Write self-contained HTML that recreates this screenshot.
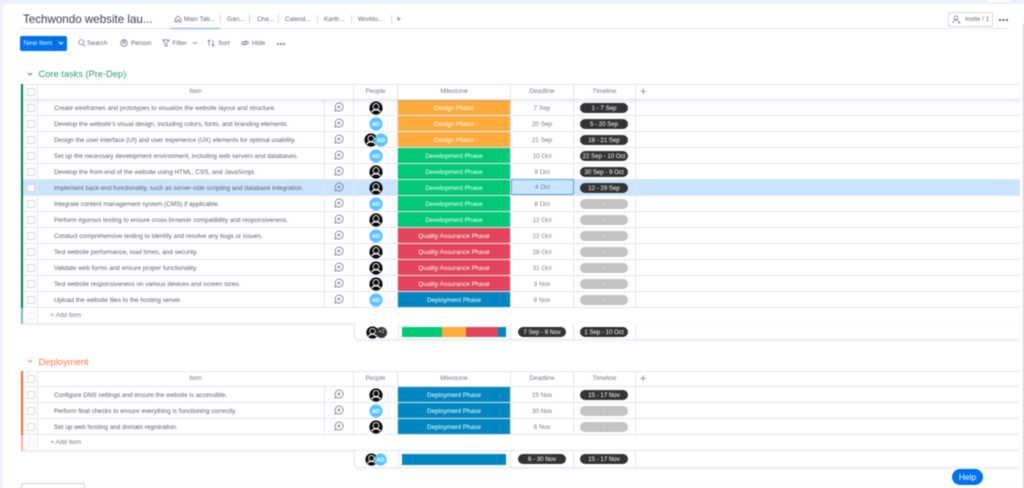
<!DOCTYPE html>
<html><head><meta charset="utf-8"><style>
html,body{margin:0;padding:0;width:1024px;height:488px;overflow:hidden;background:#ecf0fa}
*{box-sizing:border-box}
#p{position:absolute;left:0;top:0;width:1024px;height:488px;overflow:hidden;filter:blur(.4px);font-family:"Liberation Sans",sans-serif;color:#676879}
#w{position:absolute;left:3px;top:4px;width:1021px;height:490px;background:#fff;border-radius:4px 0 0 0}
.a{position:absolute;white-space:nowrap}
.ln{position:absolute;background:#e3e6f3}
.r{position:absolute;left:21px;width:999px;height:16px;border-bottom:1px solid #e3e6f3;font-size:6.35px;line-height:17px}
.r>*{position:absolute;top:0}
.bar{left:0;width:2px;height:16px;top:0}
.cb{left:6px;top:4px!important;width:7.5px;height:7.5px;border:1px solid #d5d8e3;border-radius:1px;background:#fff}
.v1,.v2,.v3,.v4,.v5,.v6{top:0;height:15px;width:1px;background:#e3e6f3}
.v1{left:16px}.v2{left:303px}.v3{left:332px}.v4{left:376px}.v5{left:489px}.v6{left:552px}.v7{left:614px;top:0;height:15px;width:1px;background:#e3e6f3}
.t{left:33px;white-space:nowrap;color:#5f6072}
.ch{left:313px;top:1.5px!important;width:10px;height:10px}
.av{left:348px;top:.5px!important;width:14px;height:14px}
.m{left:377px;width:112px;height:15px;text-align:center;color:#fff;font-size:6.4px}
.d{left:490px;width:62px;text-align:center;color:#7b7c8b;font-size:6.4px}
.pl{left:559px;width:48px;top:2.5px!important;height:10px;border-radius:5px;background:#333;color:#fff;text-align:center;font-size:6.1px;line-height:11px}
.g{background:#c4c4c4}
.or{background:#fdab3d}.gr{background:#00c875}.re{background:#e2445c}.bl{background:#0086c0}
.h{height:16px;color:#7b7c8b;font-size:6.4px;border-top:1px solid #e3e6f3}
.h>div{line-height:14.5px}
.c{text-align:center}
.add{left:29.5px;color:#7b7c8b;line-height:16px}
.sum{position:absolute;left:354px;width:666px;height:17px;background:#fff;border-bottom:1px solid #e6e9f4;border-left:1px solid #e6e9f4;border-radius:0 0 0 4px;box-shadow:0 1px 2px rgba(120,130,170,.12)}
.sum>*{position:absolute}
.sum .pl{left:225px;top:3.5px!important}
.vv{top:0;height:16px;width:1px;background:#e3e6f3}
.tb{font-size:6.4px;line-height:10px;top:14.5px}
.sep{top:15px;width:1px;height:8px;background:#d5d8e3}
.tl{font-size:6.4px;line-height:10px;top:38.5px}
</style></head><body><div id="p"><div id="w"></div>
<div class="a" style="left:987px;top:0;width:23px;height:2px;background:#fff"></div>
<svg width="0" height="0" style="position:absolute"><defs>
<symbol id="u" viewBox="0 0 14 14"><circle cx="7" cy="7" r="6.6" fill="#0b0b0e"/><circle cx="7" cy="5.6" r="3" fill="#0b0b0e" stroke="#fff" stroke-width=".9"/><path d="M2.6 11.2C3.5 9.3 5 8.9 7 8.9s3.5.4 4.4 2.3" fill="none" stroke="#fff" stroke-width="1.2"/></symbol>
<symbol id="ad" viewBox="0 0 14 14"><circle cx="7" cy="7" r="6.6" fill="#5ac5fd"/><text x="7" y="9" text-anchor="middle" font-family="Liberation Sans" font-size="5.8" font-weight="bold" fill="#fff">AD</text></symbol>
<symbol id="c" viewBox="0 0 10 10"><path d="M5 1a4 4 0 1 1-2 7.4L1 9l.7-2A4 4 0 0 1 5 1z" fill="none" stroke="#75768a" stroke-width=".8"/><path d="M3.2 5h3.6M5 3.2v3.6" stroke="#75768a" stroke-width=".8"/></symbol>
</defs></svg>

<!-- top bar -->
<div class="a" style="left:23px;top:11px;font-size:11.6px;line-height:18px;color:#3f404c">Techwondo website lau...</div>
<svg class="a" style="left:174px;top:15px" width="8" height="8" viewBox="0 0 8 8"><path d="M1 4l3-3 3 3v3H5V5H3v2H1z" fill="none" stroke="#6f7081" stroke-width=".7"/></svg>
<div class="a tb" style="left:184px">Main Tab...</div>
<div class="a tb" style="left:227px">Gan...</div>
<div class="a tb" style="left:257px">Cha...</div>
<div class="a tb" style="left:285px">Calend...</div>
<div class="a tb" style="left:324px">Kanb...</div>
<div class="a tb" style="left:358px">Worklo...</div>
<div class="a" style="left:396px;top:13.5px;font-size:9px;line-height:11px">+</div>
<div class="ln sep" style="left:220px"></div>
<div class="ln sep" style="left:249px"></div>
<div class="ln sep" style="left:278px"></div>
<div class="ln sep" style="left:317px"></div>
<div class="ln sep" style="left:351px"></div>
<div class="ln sep" style="left:391px"></div>
<div class="ln" style="left:20px;top:28px;width:989px;height:1px"></div>
<div class="ln" style="left:170px;top:28px;width:50px;height:1px;background:#6aa9ee"></div>
<div class="a" style="left:948px;top:12px;width:45px;height:15px;border:1px solid #d5d8e3;border-radius:2px"></div>
<svg class="a" style="left:952px;top:15px" width="9" height="9" viewBox="0 0 9 9"><circle cx="4" cy="2.6" r="1.8" fill="none" stroke="#6f7081" stroke-width=".7"/><path d="M1 8c0-2 1.2-3 3-3s2 .5 2.3 1M6 7.4h2.4M7.2 6.2v2.4" fill="none" stroke="#6f7081" stroke-width=".7"/></svg>
<div class="a" style="left:965px;top:14.5px;font-size:6.4px;line-height:10px">Invite / 1</div>
<div class="a" style="left:999px;top:19px;width:9px;height:2px;background:radial-gradient(circle at 1px 1px,#50515f 1px,transparent 1.1px) 0 0/3.4px 2px repeat-x"></div>

<!-- toolbar -->
<div class="a" style="left:20px;top:36px;width:47px;height:15px;background:#0073ea;border-radius:2px"></div>
<div class="a" style="left:54px;top:36px;width:1px;height:15px;background:#0060c4"></div>
<div class="a" style="left:23.5px;top:38.5px;font-size:6.8px;line-height:10px;color:#e4f0ff">New Item</div>
<svg class="a" style="left:58px;top:41px" width="6" height="5" viewBox="0 0 6 5"><path d="M1 1l2 2 2-2" fill="none" stroke="#fff" stroke-width="1"/></svg>
<svg class="a" style="left:78px;top:39px" width="8" height="8" viewBox="0 0 8 8"><circle cx="3.2" cy="3.2" r="2.5" fill="none" stroke="#6f7081" stroke-width=".7"/><path d="M5 5l2.4 2.4" stroke="#6f7081" stroke-width=".7"/></svg>
<div class="a tl" style="left:87px">Search</div>
<svg class="a" style="left:120px;top:39px" width="8" height="8" viewBox="0 0 8 8"><circle cx="4" cy="4" r="3.4" fill="none" stroke="#6f7081" stroke-width=".7"/><circle cx="4" cy="3.2" r="1.3" fill="none" stroke="#6f7081" stroke-width=".7"/></svg>
<div class="a tl" style="left:131px">Person</div>
<svg class="a" style="left:162px;top:39px" width="8" height="8" viewBox="0 0 8 8"><path d="M.6 1h6.8L5 4v3.4L3 6.6V4z" fill="none" stroke="#6f7081" stroke-width=".7"/></svg>
<div class="a tl" style="left:172.5px">Filter</div>
<svg class="a" style="left:192px;top:41px" width="6" height="5" viewBox="0 0 6 5"><path d="M1 1l2 2 2-2" fill="none" stroke="#6f7081" stroke-width=".7"/></svg>
<svg class="a" style="left:207px;top:39px" width="8" height="8" viewBox="0 0 8 8"><path d="M2 1v6M.6 2.3L2 1l1.4 1.3M6 7V1M4.6 5.7L6 7l1.4-1.3" fill="none" stroke="#6f7081" stroke-width=".7"/></svg>
<div class="a tl" style="left:218px">Sort</div>
<svg class="a" style="left:241px;top:40px" width="8" height="6" viewBox="0 0 8 6"><path d="M.5 3C2 1 6 1 7.5 3 6 5 2 5 .5 3z" fill="none" stroke="#6f7081" stroke-width=".7"/><path d="M2 5.5L6 .5" stroke="#6f7081" stroke-width=".7"/></svg>
<div class="a tl" style="left:252px">Hide</div>
<div class="a" style="left:277px;top:43px;width:8px;height:2px;background:radial-gradient(circle at 1px 1px,#6f7081 .8px,transparent .9px) 0 0/3px 2px repeat-x"></div>

<!-- group 1 -->
<svg class="a" style="left:27px;top:72px" width="6" height="5" viewBox="0 0 6 5"><path d="M1 1l2 2 2-2" fill="none" stroke="#037f4c" stroke-width=".8"/></svg>
<div class="a" style="left:38.5px;top:68px;font-size:9.3px;line-height:13px;color:#2f9f6e">Core tasks (Pre-Dep)</div>

<div class="r h" style="top:84px;box-shadow:0 2px 3px rgba(120,130,170,.14);z-index:2;background:#fff"><div class="bar" style="background:#037f4c;top:-1px"></div><div class="cb" style="top:3px!important"></div><div class="v1"></div><div class="v3"></div><div class="v4"></div><div class="v5"></div><div class="v6"></div><div class="v7"></div><div class="c" style="left:17px;width:315px">Item</div><div class="c" style="left:333px;width:43px">People</div><div class="c" style="left:377px;width:112px">Milestone</div><div class="c" style="left:490px;width:62px">Deadline</div><div class="c" style="left:553px;width:61px">Timeline</div><div style="left:619px;font-size:11px;color:#80818f;line-height:14px">+</div></div>

<div class="r" style="top:100px"><div class="bar" style="background:#037f4c"></div><div class="cb"></div><div class="v1"></div><div class="v2"></div><div class="v3"></div><div class="v4"></div><div class="v5"></div><div class="v6"></div><div class="v7"></div><div class="t">Create wireframes and prototypes to visualize the website layout and structure.</div><svg class="ch"><use href="#c"/></svg><svg class="av"><use href="#u"/></svg><div class="m or">Design Phase</div><div class="d">7 Sep</div><div class="pl">1 - 7 Sep</div></div>
<div class="r" style="top:116px"><div class="bar" style="background:#037f4c"></div><div class="cb"></div><div class="v1"></div><div class="v2"></div><div class="v3"></div><div class="v4"></div><div class="v5"></div><div class="v6"></div><div class="v7"></div><div class="t">Develop the website's visual design, including colors, fonts, and branding elements.</div><svg class="ch"><use href="#c"/></svg><svg class="av"><use href="#ad"/></svg><div class="m or">Design Phase</div><div class="d">20 Sep</div><div class="pl">5 - 20 Sep</div></div>
<div class="r" style="top:132px"><div class="bar" style="background:#037f4c"></div><div class="cb"></div><div class="v1"></div><div class="v2"></div><div class="v3"></div><div class="v4"></div><div class="v5"></div><div class="v6"></div><div class="v7"></div><div class="t">Design the user interface (UI) and user experience (UX) elements for optimal usability.</div><svg class="ch"><use href="#c"/></svg><svg class="av" style="left:343px"><use href="#u"/></svg><svg class="av" style="left:353px"><use href="#ad"/></svg><div class="m or">Design Phase</div><div class="d">21 Sep</div><div class="pl">18 - 21 Sep</div></div>
<div class="r" style="top:148px"><div class="bar" style="background:#037f4c"></div><div class="cb"></div><div class="v1"></div><div class="v2"></div><div class="v3"></div><div class="v4"></div><div class="v5"></div><div class="v6"></div><div class="v7"></div><div class="t">Set up the necessary development environment, including web servers and databases.</div><svg class="ch"><use href="#c"/></svg><svg class="av"><use href="#ad"/></svg><div class="m gr">Development Phase</div><div class="d">10 Oct</div><div class="pl">22 Sep - 10 Oct</div></div>
<div class="r" style="top:164px"><div class="bar" style="background:#037f4c"></div><div class="cb"></div><div class="v1"></div><div class="v2"></div><div class="v3"></div><div class="v4"></div><div class="v5"></div><div class="v6"></div><div class="v7"></div><div class="t">Develop the front-end of the website using HTML, CSS, and JavaScript.</div><svg class="ch"><use href="#c"/></svg><svg class="av"><use href="#u"/></svg><div class="m gr">Development Phase</div><div class="d">9 Oct</div><div class="pl">30 Sep - 9 Oct</div></div>
<div class="r" style="top:180px;background:#cce5ff"><div class="bar" style="background:#037f4c"></div><div class="cb"></div><div class="v1"></div><div class="v2"></div><div class="v3"></div><div class="v4"></div><div class="v5"></div><div class="v6"></div><div class="v7"></div><div class="t">Implement back-end functionality, such as server-side scripting and database integration.</div><svg class="ch"><use href="#c"/></svg><svg class="av"><use href="#u"/></svg><div class="m gr">Development Phase</div><div class="d" style="left:490px;width:63px;height:16px;border:1px solid #5b9fe8;top:-1px;line-height:16px">4 Oct</div><div class="pl">12 - 29 Sep</div></div>
<div class="r" style="top:196px"><div class="bar" style="background:#037f4c"></div><div class="cb"></div><div class="v1"></div><div class="v2"></div><div class="v3"></div><div class="v4"></div><div class="v5"></div><div class="v6"></div><div class="v7"></div><div class="t">Integrate content management system (CMS) if applicable.</div><svg class="ch"><use href="#c"/></svg><svg class="av"><use href="#ad"/></svg><div class="m gr">Development Phase</div><div class="d">8 Oct</div><div class="pl g">-</div></div>
<div class="r" style="top:212px"><div class="bar" style="background:#037f4c"></div><div class="cb"></div><div class="v1"></div><div class="v2"></div><div class="v3"></div><div class="v4"></div><div class="v5"></div><div class="v6"></div><div class="v7"></div><div class="t">Perform rigorous testing to ensure cross-browser compatibility and responsiveness.</div><svg class="ch"><use href="#c"/></svg><svg class="av"><use href="#u"/></svg><div class="m gr">Development Phase</div><div class="d">12 Oct</div><div class="pl g">-</div></div>
<div class="r" style="top:228px"><div class="bar" style="background:#037f4c"></div><div class="cb"></div><div class="v1"></div><div class="v2"></div><div class="v3"></div><div class="v4"></div><div class="v5"></div><div class="v6"></div><div class="v7"></div><div class="t">Conduct comprehensive testing to identify and resolve any bugs or issues.</div><svg class="ch"><use href="#c"/></svg><svg class="av"><use href="#ad"/></svg><div class="m re">Quality Assurance Phase</div><div class="d">22 Oct</div><div class="pl g">-</div></div>
<div class="r" style="top:244px"><div class="bar" style="background:#037f4c"></div><div class="cb"></div><div class="v1"></div><div class="v2"></div><div class="v3"></div><div class="v4"></div><div class="v5"></div><div class="v6"></div><div class="v7"></div><div class="t">Test website performance, load times, and security.</div><svg class="ch"><use href="#c"/></svg><svg class="av"><use href="#u"/></svg><div class="m re">Quality Assurance Phase</div><div class="d">28 Oct</div><div class="pl g">-</div></div>
<div class="r" style="top:260px"><div class="bar" style="background:#037f4c"></div><div class="cb"></div><div class="v1"></div><div class="v2"></div><div class="v3"></div><div class="v4"></div><div class="v5"></div><div class="v6"></div><div class="v7"></div><div class="t">Validate web forms and ensure proper functionality.</div><svg class="ch"><use href="#c"/></svg><svg class="av"><use href="#u"/></svg><div class="m re">Quality Assurance Phase</div><div class="d">31 Oct</div><div class="pl g">-</div></div>
<div class="r" style="top:276px"><div class="bar" style="background:#037f4c"></div><div class="cb"></div><div class="v1"></div><div class="v2"></div><div class="v3"></div><div class="v4"></div><div class="v5"></div><div class="v6"></div><div class="v7"></div><div class="t">Test website responsiveness on various devices and screen sizes.</div><svg class="ch"><use href="#c"/></svg><svg class="av"><use href="#u"/></svg><div class="m re">Quality Assurance Phase</div><div class="d">3 Nov</div><div class="pl g">-</div></div>
<div class="r" style="top:292px"><div class="bar" style="background:#037f4c"></div><div class="cb"></div><div class="v1"></div><div class="v2"></div><div class="v3"></div><div class="v4"></div><div class="v5"></div><div class="v6"></div><div class="v7"></div><div class="t">Upload the website files to the hosting server.</div><svg class="ch"><use href="#c"/></svg><svg class="av"><use href="#ad"/></svg><div class="m bl">Deployment Phase</div><div class="d">8 Nov</div><div class="pl g">-</div></div>
<div class="r" style="top:308px;box-shadow:0 1px 2px rgba(120,130,170,.12)"><div class="bar" style="background:#80bfa5"></div><div class="cb" style="border-color:#eceef5"></div><div class="v1"></div><div class="add">+ Add Item</div></div>
<div class="sum" style="top:323px"><div class="vv" style="left:43px"></div><div class="vv" style="left:155px"></div><div class="vv" style="left:218px"></div><div class="vv" style="left:280px"></div>
<svg style="left:11px;top:2.5px" width="13" height="13"><use href="#u"/></svg><div style="left:21px;top:3.5px;width:11px;height:11px;border-radius:50%;background:#333;color:#ddd;font-size:5.5px;line-height:11px;text-align:center">+2</div>
<div style="left:47px;top:3.5px;width:104px;height:10.5px;display:flex"><i style="width:40px;background:#00c875"></i><i style="width:24px;background:#fdab3d"></i><i style="width:32px;background:#e2445c"></i><i style="width:8px;background:#0086c0"></i></div>
<div class="pl" style="left:163px">7 Sep - 8 Nov</div><div class="pl">1 Sep - 10 Oct</div></div>

<!-- group 2 -->
<svg class="a" style="left:27px;top:359px" width="6" height="5" viewBox="0 0 6 5"><path d="M1 1l2 2 2-2" fill="none" stroke="#ff642e" stroke-width=".8"/></svg>
<div class="a" style="left:38.5px;top:355px;font-size:9.4px;line-height:13px;color:#fb7a48">Deployment</div>

<div class="r h" style="top:371px;background:#fff"><div class="bar" style="background:#ff642e;top:-1px"></div><div class="cb" style="top:3px!important"></div><div class="v1"></div><div class="v3"></div><div class="v4"></div><div class="v5"></div><div class="v6"></div><div class="v7"></div><div class="c" style="left:17px;width:315px">Item</div><div class="c" style="left:333px;width:43px">People</div><div class="c" style="left:377px;width:112px">Milestone</div><div class="c" style="left:490px;width:62px">Deadline</div><div class="c" style="left:553px;width:61px">Timeline</div><div style="left:619px;font-size:11px;color:#80818f;line-height:14px">+</div></div>
<div class="r" style="top:387px"><div class="bar" style="background:#ff642e"></div><div class="cb"></div><div class="v1"></div><div class="v2"></div><div class="v3"></div><div class="v4"></div><div class="v5"></div><div class="v6"></div><div class="v7"></div><div class="t">Configure DNS settings and ensure the website is accessible.</div><svg class="ch"><use href="#c"/></svg><svg class="av"><use href="#u"/></svg><div class="m bl">Deployment Phase</div><div class="d">15 Nov</div><div class="pl">15 - 17 Nov</div></div>
<div class="r" style="top:403px"><div class="bar" style="background:#ff642e"></div><div class="cb"></div><div class="v1"></div><div class="v2"></div><div class="v3"></div><div class="v4"></div><div class="v5"></div><div class="v6"></div><div class="v7"></div><div class="t">Perform final checks to ensure everything is functioning correctly.</div><svg class="ch"><use href="#c"/></svg><svg class="av"><use href="#ad"/></svg><div class="m bl">Deployment Phase</div><div class="d">30 Nov</div><div class="pl g">-</div></div>
<div class="r" style="top:419px"><div class="bar" style="background:#ff642e"></div><div class="cb"></div><div class="v1"></div><div class="v2"></div><div class="v3"></div><div class="v4"></div><div class="v5"></div><div class="v6"></div><div class="v7"></div><div class="t">Set up web hosting and domain registration.</div><svg class="ch"><use href="#c"/></svg><svg class="av"><use href="#u"/></svg><div class="m bl">Deployment Phase</div><div class="d">6 Nov</div><div class="pl g">-</div></div>
<div class="r" style="top:435px;box-shadow:0 1px 2px rgba(120,130,170,.12)"><div class="bar" style="background:#fdb79c"></div><div class="cb" style="border-color:#eceef5"></div><div class="v1"></div><div class="add">+ Add Item</div></div>
<div class="sum" style="top:450.5px"><div class="vv" style="left:43px"></div><div class="vv" style="left:155px"></div><div class="vv" style="left:218px"></div><div class="vv" style="left:280px"></div>
<svg style="left:10px;top:2px" width="13" height="13"><use href="#u"/></svg><svg style="left:19px;top:2.5px" width="13" height="13"><use href="#ad"/></svg>
<div style="left:47px;top:3.5px;width:104px;height:10.5px;background:#0086c0"></div>
<div class="pl" style="left:163px">6 - 30 Nov</div><div class="pl">15 - 17 Nov</div></div>

<div class="a" style="left:21px;top:483px;width:64px;height:10px;border:1px solid #cfd2de;border-radius:2px"></div>
<div class="a" style="left:952px;top:469px;width:31px;height:16px;border-radius:8px;background:#0073ea;color:#fff;font-size:8.5px;line-height:16px;text-align:center">Help</div>
<div class="a" style="left:1023px;top:24px;width:1px;height:464px;background:#c9cad3"></div>
</div></body></html>
